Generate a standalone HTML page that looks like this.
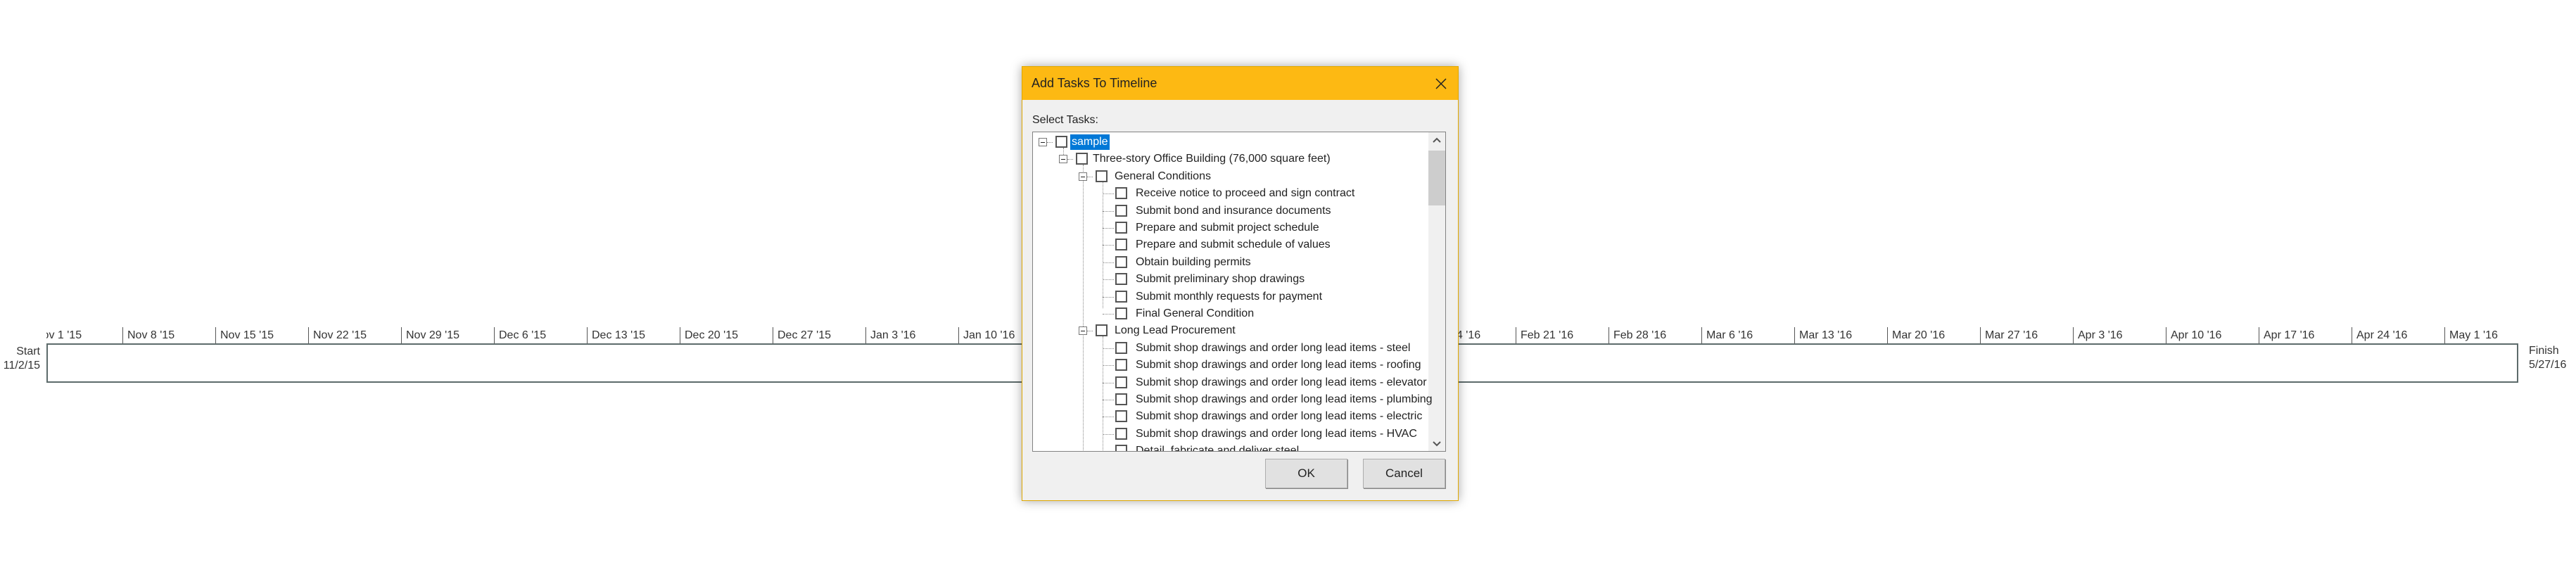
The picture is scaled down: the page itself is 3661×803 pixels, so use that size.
<!DOCTYPE html>
<html><head><meta charset="utf-8"><style>
*{margin:0;padding:0;box-sizing:border-box}
body{width:3661px;height:803px;background:#fff;position:relative;overflow:hidden;font-family:"Liberation Sans",sans-serif;color:#222}
.tick{position:absolute;height:23px;border-left:1px solid #555}
.tl{position:absolute;font-size:16px;white-space:nowrap;color:#333}
#clip{position:absolute;left:66px;top:460px;width:3513px;height:30px;overflow:hidden}
#box{position:absolute;left:66px;top:488px;width:3513px;height:56px;border:2px solid #5d6b6b;background:#fff}
.lbl{position:absolute;font-size:16px;color:#333;line-height:20px}
#dlg{position:absolute;left:1452px;top:94px;width:621px;height:618px;background:#f0f0f0;border:1px solid #e0a800;box-shadow:0 0 14px rgba(0,0,0,.35)}
#title{height:47px;background:#fdb913;position:relative}
#title span{position:absolute;left:13px;top:13px;font-size:18px;color:#222}
.row{position:absolute;height:22px;white-space:nowrap;font-size:16px;line-height:22px}
.cb{position:absolute;width:17px;height:17px;border:2px solid #555;background:#fff}
.ex{position:absolute;width:12px;height:12px;border:1px solid #777;background:#fff}
.ex:after{content:"";position:absolute;left:2px;top:5px;width:6px;height:1px;background:#222}
.vl{position:absolute;border-left:1px dotted #888}
.hl{position:absolute;border-top:1px dotted #888;height:0}
.btn{position:absolute;top:557px;width:117px;height:42px;border:1px solid #adadad;background:#e1e1e1;font-size:17px;text-align:center;line-height:40px;box-shadow:1px 1px 0 #888}
</style></head><body>
<div id="clip"></div>
<div id="box"></div>
<div class="lbl" style="left:0;width:57px;text-align:right;top:490px">Start<br>11/2/15</div>
<div class="lbl" style="left:3594px;top:489px">Finish<br>5/27/16</div>
<div id="dlg">
<div id="title"><span>Add Tasks To Timeline</span>
<svg style="position:absolute;left:586px;top:15px" width="18" height="18"><path d="M2 2L16 16M16 2L2 16" stroke="#222" stroke-width="1.5"/></svg></div>
<div style="position:absolute;left:14px;top:67px;font-size:16px">Select Tasks:</div>
<div id="list" style="position:absolute;left:14px;top:92px;width:588px;height:455px;border:1px solid #828282;background:#fff;overflow:hidden">
<div style="position:absolute;right:0;top:0;width:24px;height:100%;background:#f0f0f0">
<div style="position:absolute;left:0;top:26px;width:24px;height:78px;background:#cdcdcd"></div>
<svg style="position:absolute;left:6px;top:7px" width="12" height="8"><path d="M1 7L6 2L11 7" stroke="#555" stroke-width="2" fill="none"/></svg>
<svg style="position:absolute;left:6px;top:439px" width="12" height="8"><path d="M1 1L6 6L11 1" stroke="#555" stroke-width="2" fill="none"/></svg>
</div>
<div id="rows"></div>
</div>
<div class="btn" style="left:345px">OK</div>
<div class="btn" style="left:484px">Cancel</div>
</div>
<script>
var c=document.getElementById('clip'),h='';
var names=["Nov 1 '15","Nov 8 '15","Nov 15 '15","Nov 22 '15","Nov 29 '15","Dec 6 '15","Dec 13 '15","Dec 20 '15","Dec 27 '15","Jan 3 '16","Jan 10 '16","Jan 17 '16","Jan 24 '16","Jan 31 '16","Feb 7 '16","Feb 14 '16","Feb 21 '16","Feb 28 '16","Mar 6 '16","Mar 13 '16","Mar 20 '16","Mar 27 '16","Apr 3 '16","Apr 10 '16","Apr 17 '16","Apr 24 '16","May 1 '16"];
for(var i=0;i<names.length;i++){var x=42+i*132-66;h+='<div class="tick" style="left:'+x+'px;top:5px"></div><div class="tl" style="left:'+(x+7)+'px;top:8px">'+names[i]+'</div>';}
c.innerHTML=h;
var items=[[0,"sample",1],[1,"Three-story Office Building (76,000 square feet)",1],[2,"General Conditions",1],[3,"Receive notice to proceed and sign contract"],[3,"Submit bond and insurance documents"],[3,"Prepare and submit project schedule"],[3,"Prepare and submit schedule of values"],[3,"Obtain building permits"],[3,"Submit preliminary shop drawings"],[3,"Submit monthly requests for payment"],[3,"Final General Condition"],[2,"Long Lead Procurement",1],[3,"Submit shop drawings and order long lead items - steel"],[3,"Submit shop drawings and order long lead items - roofing"],[3,"Submit shop drawings and order long lead items - elevator"],[3,"Submit shop drawings and order long lead items - plumbing"],[3,"Submit shop drawings and order long lead items - electric"],[3,"Submit shop drawings and order long lead items - HVAC"],[3,"Detail, fabricate and deliver steel"]];
var exC=[14,43,71,99],cbL=[32,61,89,117],txL=[55,85,116,146];
var r='';
r+='<div class="vl" style="left:43px;top:22px;height:12px"></div>';
r+='<div class="vl" style="left:71px;top:46px;height:420px"></div>';
r+='<div class="vl" style="left:99px;top:70px;height:180px"></div>';
r+='<div class="vl" style="left:99px;top:290px;height:170px"></div>';
for(var i=0;i<items.length;i++){var it=items[i],lv=it[0],y=3+i*24.4;
 if(it[2]){r+='<div class="ex" style="left:'+(exC[lv]-6)+'px;top:'+(y+5)+'px"></div><div class="hl" style="left:'+(exC[lv]+6)+'px;top:'+(y+11)+'px;width:8px"></div>';}
 else{r+='<div class="hl" style="left:'+exC[lv]+'px;top:'+(y+11)+'px;width:16px"></div>';}
 r+='<div class="cb" style="left:'+cbL[lv]+'px;top:'+(y+2)+'px"></div>';
 r+='<div class="row" style="left:'+txL[lv]+'px;top:'+y+'px'+(i==0?';background:#0078d7;color:#fff;padding:0 2px;left:'+(txL[lv]-2)+'px':'')+'">'+it[1]+'</div>';}
document.getElementById('rows').innerHTML=r;
</script>
</body></html>
